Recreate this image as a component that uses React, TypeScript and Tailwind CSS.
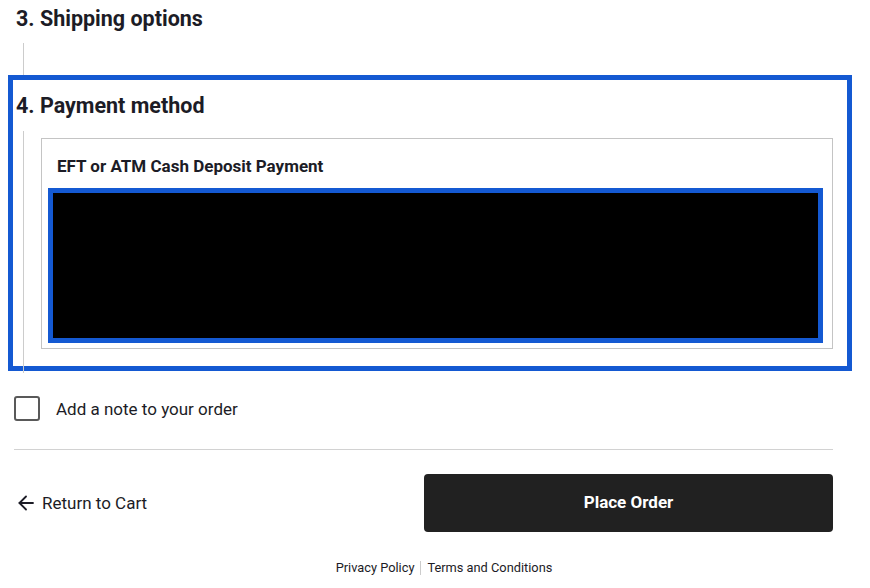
import { useState } from "react";

const BLUE = "border-[#1459d2]";

const App = () => {
  const [note, setNote] = useState(false);

  return (
    <div className="w-[870px] min-h-[588px] bg-white pl-[8px] text-[#1c1c26] font-['Roboto','Liberation_Sans',sans-serif]">
      {/* 3. Shipping options */}
      <div className="pt-[5px]">
        <h2 className="pl-[8px] text-[21.5px] leading-[28px] font-bold">3. Shipping options</h2>
        <div className="ml-[15px] mt-[10px] h-[32px] border-l border-[#cccccc]"></div>
      </div>

      {/* 4. Payment method */}
      <div className={`w-[844px] border-[5px] ${BLUE} pt-[12px] pb-[17px]`}>
        <h2 className="pl-[3px] text-[21.5px] leading-[28px] font-bold">4. Payment method</h2>
        <div className="ml-[10px] mt-[11px] pt-[7px] pb-[24px] -mb-[24px] pl-[17px] border-l border-[#cccccc]">
          <div className="w-[792px] border border-[#c4c4c4] pl-[6px] pt-[17px] pb-[5px]">
            <div className="pl-[9px] text-[17px] leading-[20px] font-bold">EFT or ATM Cash Deposit Payment</div>
            <div className={`mt-[12px] w-[775px] h-[155px] border-[5px] ${BLUE} bg-black`}></div>
          </div>
        </div>
      </div>

      {/* note */}
      <label className="ml-[6px] mt-[25px] flex items-center gap-[16px] cursor-pointer w-fit">
        <input type="checkbox" className="sr-only" checked={note} onChange={() => setNote(!note)} />
        <span className="w-[26px] h-[25px] border-2 border-[#595959] rounded-[3px] bg-white flex items-center justify-center">
          {note && <span className="w-[12px] h-[12px] bg-[#222]"></span>}
        </span>
        <span className="text-[17px] leading-[24px] text-[#1c1c26]">Add a note to your order</span>
      </label>

      <div className="ml-[6px] mt-[28px] w-[819px] border-t border-[#d2d2d2]"></div>

      {/* actions */}
      <div className="ml-[6px] mt-[24px] w-[819px] flex items-center justify-between">
        <a href="#" className="flex items-center gap-[8px] pl-[4px] text-[17px] leading-[24px] text-[#1c1c26]">
          <svg width="16" height="16" viewBox="0 0 16 16" fill="none" stroke="currentColor" strokeWidth="1.8" strokeLinecap="round" strokeLinejoin="round">
            <path d="M15 8H1.5" />
            <path d="M8 1.5L1.5 8L8 14.5" />
          </svg>
          Return to Cart
        </a>
        <button className="w-[409px] h-[58px] rounded-[4px] bg-[#212121] text-white text-[17px] font-bold">
          Place Order
        </button>
      </div>

      {/* footer */}
      <div className="ml-[6px] mt-[26px] w-[860px] flex items-center justify-center text-[12.8px] leading-[20px] text-[#1c1c26]">
        <a href="#">Privacy Policy</a>
        <span className="mx-[6px] h-[14px] border-l border-[#cccccc]"></span>
        <a href="#">Terms and Conditions</a>
      </div>
    </div>
  );
};

export default App;
